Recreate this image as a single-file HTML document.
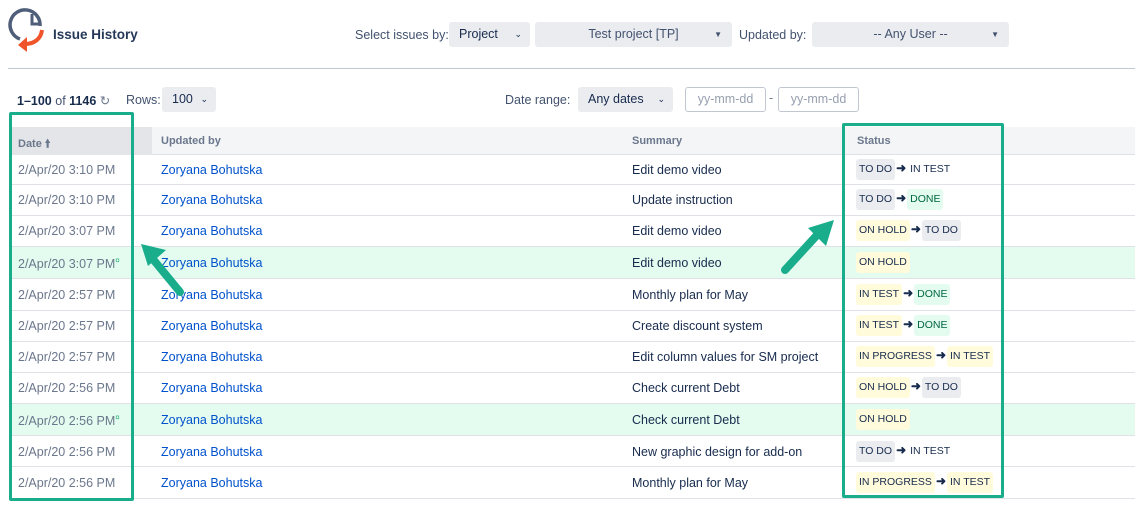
<!DOCTYPE html>
<html><head><meta charset="utf-8"><style>
*{margin:0;padding:0;box-sizing:border-box}
body{width:1135px;height:505px;overflow:hidden;background:#fff;font-family:"Liberation Sans",sans-serif;font-size:12.5px;color:#172b4d;position:relative}
.a{position:absolute;white-space:nowrap}
.sel{position:absolute;background:#ebecf0;border-radius:3px;height:25px;line-height:25px;font-size:12.5px;color:#172b4d}
.inp{position:absolute;border:1px solid #c1c7d0;border-radius:3px;height:25px;line-height:23px;color:#97a0af;text-align:center}
.row{position:absolute;left:12px;width:1123px;border-bottom:1px solid #dfe1e6}
.row div{position:absolute;top:0;white-space:nowrap}
.d{left:6px;color:#6b778c}
.u{left:149px;color:#0052cc}
.s{left:620px;color:#172b4d}
.st{left:844px;font-size:10.5px}
.l{display:inline-block;padding:0 3px;border-radius:3px;line-height:21px}
.g{background:#ebecf0}.y{background:#fffbdb}.gr{background:#e3fcef;color:#006644}
.ar{font-weight:bold;margin:0 1px;font-size:12px}
.box{position:absolute;border:3px solid #19ad8c;border-radius:2px}
</style></head><body>
<svg class="a" style="left:8px;top:6px" width="38" height="46" viewBox="0 0 38 46">
<path d="M12 33 A15 15 0 1 1 32 20" fill="none" stroke="#505f79" stroke-width="3.5"/>
<path d="M24 8 V18 H31" fill="none" stroke="#505f79" stroke-width="3"/>
<path d="M34 24 C33 33 26 38 17 38" fill="none" stroke="#f0542a" stroke-width="4"/>
<path d="M19 31 L10 39 L19 46 Z" fill="#f0542a"/>
</svg>
<div class="a" style="left:53px;top:27px;font-size:13.5px;font-weight:bold;color:#253858">Issue History</div>
<div class="a" style="left:355px;top:28px;color:#42526e">Select issues by:</div>
<div class="sel" style="left:449px;top:22px;width:81px;padding-left:10px">Project<span style="position:absolute;right:8px;font-size:9px">&#8964;</span></div>
<div class="sel" style="left:535px;top:22px;width:197px;text-align:center;color:#42526e">Test project [TP]<span style="position:absolute;right:10px;font-size:8px">&#9660;</span></div>
<div class="a" style="left:739px;top:28px;color:#42526e">Updated by:</div>
<div class="sel" style="left:812px;top:22px;width:197px;text-align:center;color:#42526e">-- Any User --<span style="position:absolute;right:10px;font-size:8px">&#9660;</span></div>
<div class="a" style="left:8px;top:68px;width:1127px;height:1px;background:#c1c7d0"></div>
<div class="a" style="left:17px;top:93px;font-size:12.5px"><b>1–100</b> <span style="color:#42526e">of</span> <b>1146</b> <span style="color:#6b778c">&#8635;</span></div>
<div class="a" style="left:126px;top:93px;color:#42526e">Rows:</div>
<div class="sel" style="left:162px;top:87px;width:54px;padding-left:10px">100<span style="position:absolute;right:8px;font-size:9px">&#8964;</span></div>
<div class="a" style="left:505px;top:93px;color:#42526e">Date range:</div>
<div class="sel" style="left:578px;top:87px;width:95px;padding-left:10px">Any dates<span style="position:absolute;right:8px;font-size:9px">&#8964;</span></div>
<div class="inp" style="left:685px;top:87px;width:81px">yy-mm-dd</div>
<div class="a" style="left:769px;top:91px;color:#6b778c">-</div>
<div class="inp" style="left:778px;top:87px;width:81px">yy-mm-dd</div>
<div class="a" style="left:12px;top:127px;width:1123px;height:28px;background:#f4f5f7;border-bottom:1px solid #dfe1e6"></div>
<div class="a" style="left:12px;top:127px;width:140px;height:28px;background:#e4e5e8"></div>
<div class="a" style="left:18px;top:135px;font-size:11px;color:#6b778c;font-weight:bold">Date &#129049;</div>
<div class="a" style="left:161px;top:135px;font-size:11px;color:#6b778c;font-weight:bold">Updated by</div>
<div class="a" style="left:632px;top:135px;font-size:11px;color:#6b778c;font-weight:bold">Summary</div>
<div class="a" style="left:857px;top:135px;font-size:11px;color:#6b778c;font-weight:bold">Status</div>

<div class="row" style="top:155px;height:30px"><div class="d" style="top:8px">2/Apr/20 3:10 PM</div><div class="u" style="top:8px">Zoryana Bohutska</div><div class="s" style="top:8px">Edit demo video</div><div class="st" style="top:4px"><span class="l g">TO DO</span><span class="ar">&#10140;</span><span class="l">IN TEST</span></div></div>
<div class="row" style="top:185px;height:31px"><div class="d" style="top:8px">2/Apr/20 3:10 PM</div><div class="u" style="top:8px">Zoryana Bohutska</div><div class="s" style="top:8px">Update instruction</div><div class="st" style="top:4px"><span class="l g">TO DO</span><span class="ar">&#10140;</span><span class="l gr">DONE</span></div></div>
<div class="row" style="top:216px;height:31px"><div class="d" style="top:8px">2/Apr/20 3:07 PM</div><div class="u" style="top:8px">Zoryana Bohutska</div><div class="s" style="top:8px">Edit demo video</div><div class="st" style="top:4px"><span class="l y">ON HOLD</span><span class="ar">&#10140;</span><span class="l g">TO DO</span></div></div>
<div class="row" style="top:247px;height:32px;background:#e3fcef"><div class="d" style="top:9px">2/Apr/20 3:07 PM<sup style="color:#36b37e;font-size:8px">&#164;</sup></div><div class="u" style="top:9px">Zoryana Bohutska</div><div class="s" style="top:9px">Edit demo video</div><div class="st" style="top:5px"><span class="l y">ON HOLD</span></div></div>
<div class="row" style="top:279px;height:32px"><div class="d" style="top:9px">2/Apr/20 2:57 PM</div><div class="u" style="top:9px">Zoryana Bohutska</div><div class="s" style="top:9px">Monthly plan for May</div><div class="st" style="top:5px"><span class="l y">IN TEST</span><span class="ar">&#10140;</span><span class="l gr">DONE</span></div></div>
<div class="row" style="top:311px;height:31px"><div class="d" style="top:8px">2/Apr/20 2:57 PM</div><div class="u" style="top:8px">Zoryana Bohutska</div><div class="s" style="top:8px">Create discount system</div><div class="st" style="top:4px"><span class="l y">IN TEST</span><span class="ar">&#10140;</span><span class="l gr">DONE</span></div></div>
<div class="row" style="top:342px;height:31px"><div class="d" style="top:8px">2/Apr/20 2:57 PM</div><div class="u" style="top:8px">Zoryana Bohutska</div><div class="s" style="top:8px">Edit column values for SM project</div><div class="st" style="top:4px"><span class="l y">IN PROGRESS</span><span class="ar">&#10140;</span><span class="l y">IN TEST</span></div></div>
<div class="row" style="top:373px;height:31px"><div class="d" style="top:8px">2/Apr/20 2:56 PM</div><div class="u" style="top:8px">Zoryana Bohutska</div><div class="s" style="top:8px">Check current Debt</div><div class="st" style="top:4px"><span class="l y">ON HOLD</span><span class="ar">&#10140;</span><span class="l g">TO DO</span></div></div>
<div class="row" style="top:404px;height:32px;background:#e3fcef"><div class="d" style="top:9px">2/Apr/20 2:56 PM<sup style="color:#36b37e;font-size:8px">&#164;</sup></div><div class="u" style="top:9px">Zoryana Bohutska</div><div class="s" style="top:9px">Check current Debt</div><div class="st" style="top:5px"><span class="l y">ON HOLD</span></div></div>
<div class="row" style="top:436px;height:31px"><div class="d" style="top:9px">2/Apr/20 2:56 PM</div><div class="u" style="top:9px">Zoryana Bohutska</div><div class="s" style="top:9px">New graphic design for add-on</div><div class="st" style="top:5px"><span class="l g">TO DO</span><span class="ar">&#10140;</span><span class="l">IN TEST</span></div></div>
<div class="row" style="top:467px;height:32px"><div class="d" style="top:9px">2/Apr/20 2:56 PM</div><div class="u" style="top:9px">Zoryana Bohutska</div><div class="s" style="top:9px">Monthly plan for May</div><div class="st" style="top:5px"><span class="l y">IN PROGRESS</span><span class="ar">&#10140;</span><span class="l y">IN TEST</span></div></div>

<div class="box" style="left:9px;top:112px;width:125px;height:389px"></div>
<div class="box" style="left:842px;top:123px;width:162px;height:375px"></div>
<svg class="a" style="left:0;top:0" width="1135" height="505">
<line x1="180" y1="292" x2="152" y2="258" stroke="#19ad8c" stroke-width="8" stroke-linecap="round"/>
<polygon points="141,244 166,250 148,266" fill="#19ad8c"/>
<line x1="785" y1="270" x2="818" y2="234" stroke="#19ad8c" stroke-width="8" stroke-linecap="round"/>
<polygon points="834,220 826,246 808,228" fill="#19ad8c"/>
</svg>
</body></html>
